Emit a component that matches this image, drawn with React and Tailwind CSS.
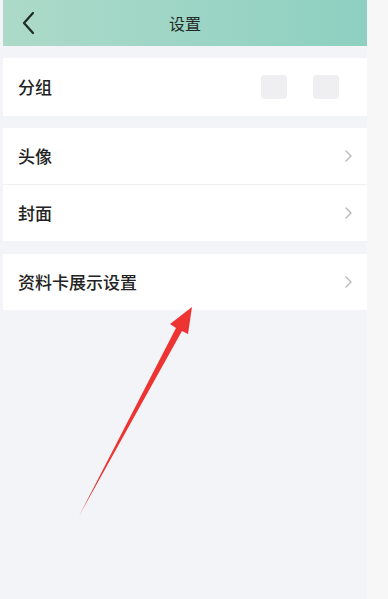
import React from 'react';

const font = { fontFamily: '"Noto Sans CJK SC", "Noto Sans", sans-serif' };

function Chevron() {
  return (
    <svg width="10" height="14" viewBox="0 0 10 14" fill="none" stroke="#b5b8bd" strokeWidth="1.4" strokeLinecap="round" strokeLinejoin="round">
      <path d="M3 2l5 5-5 5" />
    </svg>
  );
}

function Row({ label, arrow = true }) {
  return (
    <div className="flex items-center justify-between h-[56px] pl-[15px] pr-[14px] bg-white">
      <span className="text-[17px] font-medium text-[#222]">{label}</span>
      {arrow && <Chevron />}
    </div>
  );
}

function App() {
  return (
    <div className="relative flex w-[388px] h-[599px] bg-[#f7f7f8] overflow-hidden" style={font}>
      <div className="flex flex-col w-[367px] h-full pl-[3px] bg-[#f2f4f7]">
        <div className="relative flex items-center justify-center h-[46px] bg-gradient-to-r from-[#addac9] to-[#8dd0c1]">
          <svg className="absolute left-[18px] top-[11px]" width="16" height="24" viewBox="0 0 16 24" fill="none" stroke="#1e2a26" strokeWidth="2.2" strokeLinecap="round" strokeLinejoin="round">
            <path d="M12 2L3 12l9 10" />
          </svg>
          <span className="text-[16px] text-[#1f2a28]">设置</span>
        </div>
        <div className="mt-[12px]">
          <div className="flex items-center h-[58px] pl-[15px] pr-[18px] bg-white">
            <span className="text-[17px] font-medium text-[#222]">分组</span>
            <div className="flex-1" />
            <div className="w-[26px] h-[24px] bg-[#efeff1] rounded-sm mr-[26px]" />
            <div className="w-[26px] h-[24px] bg-[#efeff1] rounded-sm mr-[10px]" />
          </div>
        </div>
        <div className="mt-[12px] flex flex-col bg-white">
          <Row label="头像" />
          <div className="h-px bg-[#eef0f2]" />
          <Row label="封面" />
        </div>
        <div className="mt-[13px]">
          <Row label="资料卡展示设置" />
        </div>
      </div>
      <svg className="absolute left-0 top-0 pointer-events-none" width="388" height="599" viewBox="0 0 388 599">
        <path d="M79 516 L176 328 L170 324 L192 307 L188 334 L182 331 Z" fill="#ee3333" />
      </svg>
    </div>
  );
}

export default App;
